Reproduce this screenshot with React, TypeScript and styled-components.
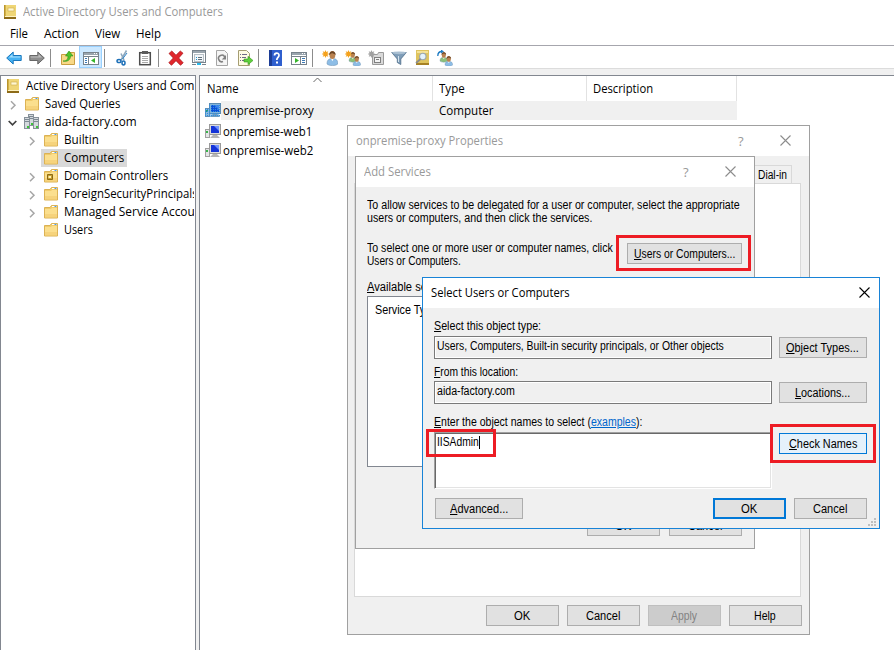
import React, { useLayoutEffect, useRef, useState } from "react";
import styled, { createGlobalStyle, css } from "styled-components";

const Global = createGlobalStyle`
  * { box-sizing: border-box; }
  html, body { margin: 0; padding: 0; background: #fff; overflow: hidden; }
  svg { display: block; flex: none; }
`;

const shell = '"Open Sans", "Noto Sans", sans-serif';
const classic = '"Liberation Sans", Arial, sans-serif';

/* ---------- text condensed to a given run length ---------- */
const Run = styled.span<{ $w: number }>`
  display: inline-block;
  flex: none;
  width: ${(p) => p.$w}px;
  white-space: nowrap;
  vertical-align: top;
`;
const Glyphs = styled.span`
  display: inline-block;
  white-space: nowrap;
  transform-origin: 0 50%;
  u {
    text-decoration-thickness: 1px;
    text-underline-offset: 1px;
    text-decoration-skip-ink: none;
  }
`;
function Text({ w, children }: { w: number; children: React.ReactNode }) {
  const ref = useRef<HTMLSpanElement>(null);
  const [scale, setScale] = useState(1);
  useLayoutEffect(() => {
    if (ref.current) setScale(w / ref.current.offsetWidth);
  }, [w]);
  return (
    <Run $w={w}>
      <Glyphs ref={ref} style={{ transform: `scaleX(${scale})` }}>
        {children}
      </Glyphs>
    </Run>
  );
}

/* ---------- main window ---------- */
const Desktop = styled.div`
  position: relative;
  width: 894px;
  height: 650px;
  overflow: hidden;
  display: flex;
  flex-direction: column;
  background: #fff;
  color: #000;
  font: 12px/18px ${shell};
`;
const TitleBar = styled.div`
  height: 24px;
  display: flex;
  align-items: center;
  gap: 6px;
  padding-left: 3px;
  color: #999;
`;
const MenuBar = styled.div`
  height: 21px;
  display: flex;
  gap: 16px;
  padding: 1px 0 0 10px;
`;
const Toolbar = styled.div`
  height: 24px;
  display: flex;
  border-top: 1px solid #a6a6ad;
  border-bottom: 1px solid #dcdcdc;
  padding-left: 2px;
  background: #fff;
`;
const Tool = styled.div<{ $on?: boolean }>`
  width: 23px;
  height: 22px;
  padding-top: 2px;
  display: flex;
  align-items: center;
  justify-content: center;
  ${(p) => p.$on && css`background: #cce8ff; border: 1px solid #99d1ff;`}
`;
const Divider = styled.div`
  width: 8px;
  padding: 3px 0 2px 2px;
  &::before { content: ""; display: block; width: 1px; height: 18px; background: #8c8c8c; }
`;
const Panes = styled.div`
  flex: 1;
  display: flex;
  gap: 3px;
  padding-top: 6px;
  background: #f0f0f0;
`;
const Tree = styled.div`
  width: 196px;
  padding-top: 1px;
  background: #fff;
  border: 1px solid #828790;
  border-bottom: 0;
  overflow: hidden;
`;
const TreeClip = styled.div`
  width: 193px;
  overflow: hidden;
`;
const Node = styled.div<{ $depth: number }>`
  height: 18px;
  display: flex;
  align-items: center;
  padding-left: ${(p) => [4, 3, 22][p.$depth]}px;
`;
const Twisty = styled.span`
  width: 18px;
  height: 16px;
  flex: none;
  padding: 1px 0 0 4px;
  display: flex;
  align-items: center;
`;
const NodeBody = styled.span<{ $selected?: boolean }>`
  flex: none;
  display: flex;
  align-items: center;
  height: 18px;
  gap: 6px;
  padding: 0 3px 0 1px;
  background: ${(p) => (p.$selected ? "#d9d9d9" : "transparent")};
`;
const List = styled.div`
  flex: 1;
  background: #fff;
  border: 1px solid #828790;
  border-right: 0;
  border-bottom: 0;
`;
const Header = styled.div`
  position: relative;
  height: 25px;
  display: grid;
  grid-template-columns: 233px 154px 150px;
`;
const HeadCell = styled.div<{ $pad: number }>`
  padding: 4px 0 0 ${(p) => p.$pad}px;
  border-right: 1px solid #e2e2e2;
`;
const SortMark = styled.svg`
  position: absolute;
  left: 113px;
  top: 1px;
`;
const ListRow = styled.div<{ $selected?: boolean }>`
  height: ${(p) => (p.$selected ? 21 : 19)}px;
  width: 537px;
  display: grid;
  grid-template-columns: 23px 216px 1fr;
  align-items: start;
  padding-top: 1px;
  background: ${(p) =>
    p.$selected ? "linear-gradient(#f0f0f0, #f0f0f0) 21px 0 / 516px 19px no-repeat" : "none"};
`;
const RowIcon = styled.span`
  padding: 1px 0 0 5px;
`;

/* ---------- dialogs ---------- */
const Dialog = styled.section<{ $x: number; $y: number; $w: number; $h: number; $active?: boolean }>`
  position: absolute;
  left: ${(p) => p.$x}px;
  top: ${(p) => p.$y}px;
  width: ${(p) => p.$w}px;
  height: ${(p) => p.$h}px;
  display: flex;
  flex-direction: column;
  background: #f0f0f0;
  border: 1px solid ${(p) => (p.$active ? "#1883d7" : "#a0a0a0")};
  font: 12px/13px ${classic};
`;
const Caption = styled.header<{ $active?: boolean }>`
  height: 30px;
  flex: none;
  display: flex;
  align-items: center;
  padding: 0 ${(p) => (p.$active ? 9 : 18)}px 0 8px;
  background: #fff;
  color: ${(p) => (p.$active ? "#000" : "#999")};
  font: 12px/18px ${shell};
`;
const CaptionButtons = styled.span`
  margin-left: auto;
  display: flex;
  align-items: center;
  gap: 36px;
  padding-bottom: 1px;
  font-size: 13px;
`;
const PushButton = styled.button<{ $w?: number; $kind?: "default" | "hot" | "disabled" }>`
  width: ${(p) => p.$w ?? 73}px;
  height: 21px;
  flex: none;
  padding: 1px 1px 0 0;
  text-align: center;
  border: 1px solid #adadad;
  border-radius: 0;
  background: #e1e1e1;
  color: #000;
  font: 12px/13px ${classic};
  ${(p) => p.$kind === "default" && css`border: 2px solid #0078d7;`}
  ${(p) => p.$kind === "hot" && css`border-color: #0078d7; background: #e5f1fb;`}
  ${(p) => p.$kind === "disabled" && css`border-color: #bfbfbf; background: #ccc; color: #838383;`}
`;
const Buttons = styled.div<{ $top: number; $right: number; $gap: number }>`
  display: flex;
  justify-content: flex-end;
  gap: ${(p) => p.$gap}px;
  padding: ${(p) => p.$top}px ${(p) => p.$right}px 0 0;
`;
const TabStrip = styled.div`
  height: 27px;
  padding: 9px 17px 0 0;
  display: flex;
  justify-content: flex-end;
`;
const Tab = styled.div`
  width: 40px;
  height: 18px;
  padding: 3px 0 0 5px;
  border: 1px solid #d9d9d9;
  border-bottom: 0;
`;
const TabPage = styled.div`
  width: 447px;
  height: 414px;
  margin-left: 6px;
  background: #fff;
  border: 1px solid #d9d9d9;
`;
const AddBody = styled.div`
  padding: 12px 0 0 11px;
  display: flex;
  flex-direction: column;
`;
const Para = styled.p`
  margin: 0;
  height: 26px;
  display: flex;
  flex-direction: column;
`;
const PickRow = styled.div`
  display: flex;
  align-items: flex-start;
  gap: 14px;
  padding-top: 17px;
`;
const PickButton = styled.div`
  height: 22px;
  padding-top: 1px;
`;
const ListLabel = styled.div`
  padding-top: 13px;
`;
const ServiceList = styled.div`
  width: 375px;
  height: 171px;
  margin-top: 2px;
  padding: 7px;
  background: #fff;
  border: 1px solid #828790;
`;
const Form = styled.div`
  display: grid;
  grid-template-columns: 338px 88px;
  column-gap: 7px;
  padding: 12px 0 0 11px;
`;
const FieldLabel = styled.label<{ $h: number; $top?: number }>`
  grid-column: 1 / -1;
  height: ${(p) => p.$h}px;
  padding-top: ${(p) => p.$top ?? 0}px;
  a { color: #0066cc; text-decoration: underline; text-underline-offset: 1px; }
`;
const Field = styled.div`
  height: 23px;
  padding: 3px 0 0 2px;
  border: 1px solid #7a7a7a;
  box-shadow: inset -1px -1px #fff, inset 1px 1px #fff;
`;
const NamesBox = styled.div`
  height: 57px;
  padding: 3px 0 0 2px;
  display: flex;
  align-items: flex-start;
  background: #fff;
  border: 1px solid;
  border-color: #a0a0a0 #fff #fff #a0a0a0;
  box-shadow: inset 1px 1px #696969, inset -1px -1px #e3e3e3;
`;
const Caret = styled.span`
  width: 1px;
  height: 13px;
  background: #000;
`;
const ButtonSlot = styled.div`
  padding-top: 1px;
`;
const FormFooter = styled.div`
  display: flex;
  padding: 9px 12px 0 12px;
  gap: 8px;
`;
const Spacer = styled.span`
  flex: 1;
`;
const Grip = styled.svg`
  position: absolute;
  right: 3px;
  bottom: 2px;
`;
const Callout = styled.div<{ $x: number; $y: number; $w: number; $h: number }>`
  position: absolute;
  left: ${(p) => p.$x}px;
  top: ${(p) => p.$y}px;
  width: ${(p) => p.$w}px;
  height: ${(p) => p.$h}px;
  border: 3px solid #ed1c24;
`;

/* ---------- icons ---------- */
const Svg = ({ children, w = 16, h = 16 }: { children: React.ReactNode; w?: number; h?: number }) => (
  <svg width={w} height={h} viewBox={`0 0 ${w} ${h}`}>{children}</svg>
);
const Book = () => (
  <Svg w={14}>
    <rect x="1" y="1" width="12" height="14" fill="#b9952d" />
    <rect x="2" y="1" width="11" height="11" fill="#efd676" />
    <rect x="2" y="1" width="1" height="12" fill="#d2b14a" />
    <rect x="5" y="4" width="6" height="3" fill="#fff7d0" stroke="#c9aa4a" strokeWidth=".6" />
    <rect x="2" y="12" width="11" height="1" fill="#fff3c2" />
    <rect x="1" y="13" width="12" height="2" fill="#8d6b18" />
  </Svg>
);
const Folder = ({ ou }: { ou?: boolean }) => (
  <Svg w={16}>
    <path d="M2.500 3.500h5.500l1.500-2h6v12.500h-13z" fill="#f0cb6a" stroke="#dcb254" />
    <path d="M10 2.500h5" stroke="#fff" />
    <path d="M12.500 2.500h2" stroke="#4c9be8" />
    <path d="M3 5h6l1-1h5v9H3z" fill="#fbdf8e" />
    <path d="M3 10h12v3.500H3z" fill="#f6d37c" />
    {ou && <path d="M5.500 6.500h5v5h-5z" fill="#c9a02c" stroke="#8b6a15" />}
    {ou && <path d="M6.500 8h2.500v2h-2.500z" fill="#fff2b8" />}
  </Svg>
);
const Domain = () => (
  <Svg>
    {[[5, 0], [1, 3], [10, 3]].map(([x, y]) => (
      <g key={x}>
        <rect x={x + 0.5} y={y + 0.5} width="5" height="11" fill="#d5dade" stroke="#87919a" />
        <path d={`M${x + 1} ${y + 2}.500h4M${x + 1} ${y + 4}.500h4`} stroke="#7d8993" />
        <rect x={x + 3} y={y + 9} width="2" height="2" fill="#3fc43a" />
      </g>
    ))}
  </Svg>
);
const ChevronRight = () => (
  <Svg w={9} h={12}><path d="M3 2.200l4 4-4 4" fill="none" stroke="#a6a6a6" strokeWidth="1.500" /></Svg>
);
const ChevronDown = () => (
  <Svg w={9} h={10}><path d="M.7 3l3.800 3.800L8.300 3" fill="none" stroke="#404040" strokeWidth="1.700" /></Svg>
);
const Computer = ({ selected }: { selected?: boolean }) => (
  <Svg w={17}>
    <rect x="0.500" y="5.500" width="4" height="8" fill="#e4e5e7" stroke="#a0a0a0" />
    <rect x="1" y="7" width="2" height="2" fill="#39b54a" />
    <rect x="4.500" y=".5" width="11" height="10" fill="#dcdcdc" stroke="#9a9a9a" />
    <rect x="6" y="2" width="8" height="7" fill="#1534d8" />
    <path d="M9 2h5v5z" fill="#6f92ff" />
    <path d="M8 11h4l3 3H5z" fill="#b5b5b5" />
    {selected && <path d="M0 5h4V0h12v11h-2l1 3H0z" fill="#0078d7" fillOpacity=".4" />}
    {selected && (
      <path d="M0 6.500h16M4 2.500h12M4 4.500h12M0 8.500h16M0 10.500h16M0 12.500h15" stroke="#2f8fe0" strokeDasharray="1 1" />
    )}
  </Svg>
);
const Close = ({ dark }: { dark?: boolean }) => (
  <Svg w={11} h={11}><path d="M.5.500l10 10M10.500.500l-10 10" stroke={dark ? "#000" : "#8c8c8c"} strokeWidth="1.100" /></Svg>
);
const BackArrow = () => (
  <Svg><path d="M.7 8l6.500-6v3.500h8v5h-8V14z" fill="#46b2f2" stroke="#1876bd" /><path d="M3 7.500L6.500 4v2.500h8v1z" fill="#a5defb" /></Svg>
);
const ForwardArrow = () => (
  <Svg><path d="M15.300 8l-6.500-6v3.500h-8v5h8V14z" fill="#8e8e8e" stroke="#666" /><path d="M13 7.500L9.500 4v2.500h-8v1z" fill="#bdbdbd" /></Svg>
);
const FolderUp = () => (
  <Svg>
    <path d="M1.500 4.500h6l1-2h6v12h-13z" fill="#f8d886" stroke="#c99f43" />
    <path d="M3 11c4 0 5-2 5-5H5.500L9 1l4 5h-2.500c0 4-3 6-7.500 5z" fill="#4fc52c" stroke="#2b9118" strokeWidth=".6" />
  </Svg>
);
const Console = ({ play }: { play?: boolean }) => (
  <Svg>
    <rect x=".5" y="2.500" width="15" height="12" fill="#fff" stroke="#78838c" />
    <rect x="1" y="3" width="14" height="2" fill="#9aa5ae" />
    <path d="M11 3.500h1M13 3.500h1" stroke="#fff" />
    <path d="M0 6.500h16" stroke="#78838c" />
    {play ? (
      <g><path d="M9.500 7v7" stroke="#78838c" /><path d="M4 8l4 2.500L4 13z" fill="#35b52b" /><path d="M11 8.500h3M11 10.500h3M11 12.500h3" stroke="#3c78b4" /></g>
    ) : (
      <g><path d="M5.500 7v7" stroke="#78838c" /><path d="M12 8l-4 2.500 4 2.500z" fill="#35b52b" /><path d="M2 8.500h2M2 10.500h2M2 12.500h2" stroke="#3c78b4" /></g>
    )}
  </Svg>
);
const Scissors = () => (
  <Svg>
    <path d="M12.500.500L7 10M7 3.500L10 10" stroke="#8fa9be" strokeWidth="1.600" />
    <ellipse cx="5" cy="11" rx="2" ry="1.600" fill="none" stroke="#1d70b8" strokeWidth="1.500" />
    <ellipse cx="9.500" cy="13" rx="1.500" ry="1.900" fill="none" stroke="#1d70b8" strokeWidth="1.500" />
    <path d="M13 3L8.500 9" stroke="#2d83c9" />
  </Svg>
);
const Clipboard = () => (
  <Svg>
    <rect x="2.700" y="2.700" width="10.600" height="12" fill="#fff" stroke="#4d4d4d" strokeWidth="1.500" />
    <path d="M5 1h6v3H5z" fill="#5b5b5b" />
    <path d="M5 6.500h6M5 8.500h6M5 10.500h6M5 12.500h6" stroke="#aaa" />
  </Svg>
);
const Delete = () => (
  <Svg><path d="M1 3.500L3.800 1 8 5.200 12.300 1 15 3.200 10.700 8l4.500 4.800-2.700 2.500L8 10.700l-4.500 4.600L.8 12.700 5.300 8z" fill="#e0262c" stroke="#a81116" strokeWidth=".7" /></Svg>
);
const Properties = () => (
  <Svg>
    <rect x="1.500" y=".5" width="13" height="12" fill="#fff" stroke="#78838c" />
    <path d="M2 2h12" stroke="#9aa5ae" strokeWidth="2" />
    <rect x="3.500" y="4.500" width="9" height="7" fill="#f3f7fa" stroke="#b7c0c7" />
    <path d="M5 7.500h1M5 9.500h1" stroke="#2294d0" /><path d="M7 7.500h4M7 9.500h4" stroke="#62717c" />
    <rect x="6" y="13" width="4" height="2" fill="#29b8ea" /><path d="M1 14.500h4M11 14.500h4" stroke="#78838c" />
  </Svg>
);
const Refresh = () => (
  <Svg>
    <path d="M2.500.500h8l3 3v12h-11z" fill="#f5f5f5" stroke="#a5a5a5" />
    <path d="M10.800 7A3.300 3.300 0 1 0 9 11.500" fill="none" stroke="#808080" strokeWidth="1.600" />
    <path d="M12 5v4.500H7.800z" fill="#808080" />
  </Svg>
);
const Export = () => (
  <Svg>
    <path d="M1.500.500h8l3 3v12h-11z" fill="#fffbe3" stroke="#a59d72" />
    <path d="M3 4.500h1M3 7.500h1M3 10.500h1M5 4.500h5M5 7.500h4M5 10.500h3" stroke="#6f6a86" />
    <path d="M7 9h4V6.300l5 4.200-5 4.200V12H7z" fill="#5fcf3d" stroke="#35991d" strokeWidth=".6" />
  </Svg>
);
const HelpBook = () => (
  <Svg>
    <rect x="1" y="0" width="13" height="16" fill="#2f5fce" /><rect x="1" y="0" width="3" height="16" fill="#1c3d96" />
    <path d="M6.500 5.500c0-3 4.500-3 4.500-.3C11 7.500 8.800 7.300 8.800 10" fill="none" stroke="#fff" strokeWidth="1.700" />
    <rect x="8" y="11.500" width="2" height="2" fill="#fff" />
  </Svg>
);
const star = "M3.500 0l.8 2 2-.8-.9 2 2 .8-2 .8.9 2-2-.8-.8 2-.8-2-2 .8.9-2-2-.8 2-.8-.9-2 2 .8z";
const Person = ({ x, y, s, c }: { x: number; y: number; s: number; c: string }) => (
  <g transform={`translate(${x} ${y}) scale(${s})`}>
    <path d="M0 12c0-4 2-5 5-5s5 1 5 5c-2 2-8 2-10 0z" fill={c} stroke="#6c92b3" strokeWidth=".5" />
    <path d="M3.500 6.500h3L5 9.500z" fill="#fff" />
    <ellipse cx="5" cy="3.800" rx="2.700" ry="3.700" fill="#b98250" />
    <path d="M2 4C1.600-1 8.400-1 8 4 7.400 2 5 2.500 4 2z" fill="#6b4526" />
  </g>
);
const NewUser = () => (<Svg><Person x={5} y={1} s={1.080} c="#8dbde6" /><path d={star} fill="#f4a21d" /></Svg>);
const NewGroup = () => (<Svg><Person x={4} y={2} s={0.760} c="#8bc07a" /><Person x={8} y={6} s={0.760} c="#8dbde6" /><path d={star} fill="#f4a21d" /></Svg>);
const NewOU = () => (
  <Svg>
    <path d="M4.500 4.500h5l1-2h5v12h-11z" fill="#d9d9d9" stroke="#9a9a9a" />
    <rect x="6.500" y="7.500" width="6" height="5" fill="#f3f3f3" stroke="#808080" /><path d="M8 9.500h3" stroke="#808080" />
    <path d={star} fill="#a0a0a0" />
  </Svg>
);
const Filter = () => (
  <Svg><path d="M.7 2.500h14.600L9.800 9v5.500l-3.500-2V9z" fill="#7f9db8" stroke="#4b6b88" strokeWidth=".8" /><ellipse cx="8" cy="2.800" rx="7" ry="1.400" fill="#a9bfd2" /><path d="M7.500 6v6" stroke="#d6e4ee" /></Svg>
);
const Find = () => (
  <Svg>
    <rect x="2" y="0" width="13" height="15" fill="#dfc45e" /><rect x="2" y="13" width="13" height="2" fill="#a68124" />
    <rect x="3" y="1" width="11" height="2" fill="#f5e397" />
    <circle cx="8.800" cy="6.500" r="3.200" fill="#e4f3fb" stroke="#9aa7b0" strokeWidth="1.100" /><path d="M6.500 9L2 13" stroke="#8a8c8e" strokeWidth="1.700" />
  </Svg>
);
const AddToGroup = () => (
  <Svg><Person x={3} y={2} s={0.760} c="#8bc07a" /><Person x={8} y={6} s={0.760} c="#8dbde6" /><path d="M.8 6C.8 2.500 2 1.500 5 1.500" fill="none" stroke="#1e7cc4" strokeWidth="1.300" /><path d="M4-.5l3 2-3 2z" fill="#1e7cc4" /></Svg>
);
const ShowActions = () => <Console play />;

const toolGroups = [
  [BackArrow, ForwardArrow],
  [FolderUp, Console],
  [Scissors, Clipboard],
  [Delete, Properties, Refresh, Export],
  [HelpBook, ShowActions],
  [NewUser, NewGroup, NewOU, Filter, Find, AddToGroup],
];

type TreeItem = { label: string; w: number; depth: number; arrow?: "right" | "down"; icon?: "domain" | "ou"; selected?: boolean };
const treeItems: TreeItem[] = [
  { label: "Saved Queries", w: 75, depth: 1, arrow: "right" },
  { label: "aida-factory.com", w: 92, depth: 1, arrow: "down", icon: "domain" },
  { label: "Builtin", w: 35, depth: 2, arrow: "right" },
  { label: "Computers", w: 60, depth: 2, selected: true },
  { label: "Domain Controllers", w: 104, depth: 2, arrow: "right", icon: "ou" },
  { label: "ForeignSecurityPrincipals", w: 134, depth: 2, arrow: "right" },
  { label: "Managed Service Accounts", w: 148, depth: 2, arrow: "right" },
  { label: "Users", w: 29, depth: 2 },
];
const computers = [
  { name: "onpremise-proxy", w: 91, type: "Computer" },
  { name: "onpremise-web1", w: 89 },
  { name: "onpremise-web2", w: 90 },
];

export default function App() {
  return (
    <Desktop>
      <Global />
      <TitleBar><Book /><Text w={200}>Active Directory Users and Computers</Text></TitleBar>
      <MenuBar>
        <Text w={18}>File</Text><Text w={35}>Action</Text><Text w={25}>View</Text><Text w={25}>Help</Text>
      </MenuBar>
      <Toolbar>
        {toolGroups.map((group, g) => (
          <React.Fragment key={g}>
            {g > 0 && <Divider />}
            {group.map((Icon, i) => <Tool key={i} $on={g === 1 && i === 1}><Icon /></Tool>)}
          </React.Fragment>
        ))}
      </Toolbar>
      <Panes>
        <Tree>
          <TreeClip>
            <Node $depth={0}><NodeBody><Book /><Text w={168}>Active Directory Users and Com</Text></NodeBody></Node>
            {treeItems.map((t) => (
              <Node key={t.label} $depth={t.depth}>
                <Twisty>{t.arrow === "right" && <ChevronRight />}{t.arrow === "down" && <ChevronDown />}</Twisty>
                <NodeBody $selected={t.selected}>
                  {t.icon === "domain" ? <Domain /> : <Folder ou={t.icon === "ou"} />}
                  <Text w={t.w}>{t.label}</Text>
                </NodeBody>
              </Node>
            ))}
          </TreeClip>
        </Tree>
        <List>
          <Header>
            <SortMark width="9" height="6" viewBox="0 0 9 6"><path d="M.5 5l4-4 4 4" fill="none" stroke="#666" /></SortMark>
            <HeadCell $pad={7}><Text w={32}>Name</Text></HeadCell>
            <HeadCell $pad={6}><Text w={26}>Type</Text></HeadCell>
            <HeadCell $pad={6}><Text w={60}>Description</Text></HeadCell>
          </Header>
          {computers.map((c, i) => (
            <ListRow key={c.name} $selected={i === 0}>
              <RowIcon><Computer selected={i === 0} /></RowIcon>
              <Text w={c.w}>{c.name}</Text>
              {c.type && <Text w={55}>{c.type}</Text>}
            </ListRow>
          ))}
        </List>
      </Panes>

      <Dialog $x={347} $y={125} $w={463} $h={510}>
        <Caption>
          <Text w={147}>onpremise-proxy Properties</Text>
          <CaptionButtons><Text w={6}>?</Text><Close /></CaptionButtons>
        </Caption>
        <TabStrip><Tab><Text w={29}>Dial-in</Text></Tab></TabStrip>
        <TabPage />
        <Buttons $top={8} $right={7} $gap={8}>
          <PushButton><Text w={16}>OK</Text></PushButton>
          <PushButton><Text w={34}>Cancel</Text></PushButton>
          <PushButton $kind="disabled"><Text w={26}>Apply</Text></PushButton>
          <PushButton><Text w={22}>Help</Text></PushButton>
        </Buttons>
      </Dialog>

      <Dialog $x={355} $y={156} $w={400} $h={393}>
        <Caption>
          <Text w={67}>Add Services</Text>
          <CaptionButtons><Text w={6}>?</Text><Close /></CaptionButtons>
        </Caption>
        <AddBody>
          <Para>
            <Text w={373}>To allow services to be delegated for a user or computer, select the appropriate</Text>
            <Text w={225}>users or computers, and then click the services.</Text>
          </Para>
          <PickRow>
            <Para>
              <Text w={246}>To select one or more user or computer names, click</Text>
              <Text w={94}>Users or Computers.</Text>
            </Para>
            <PickButton><PushButton $w={115}><Text w={101}><u>U</u>sers or Computers...</Text></PushButton></PickButton>
          </PickRow>
          <ListLabel><Text w={92}><u>A</u>vailable services:</Text></ListLabel>
          <ServiceList><Text w={62}>Service Type</Text></ServiceList>
        </AddBody>
        <Buttons $top={48} $right={12} $gap={9}>
          <PushButton><Text w={16}>OK</Text></PushButton>
          <PushButton><Text w={34}>Cancel</Text></PushButton>
        </Buttons>
      </Dialog>
      <Callout $x={616} $y={235} $w={135} $h={36} />

      <Dialog $active $x={422} $y={277} $w={458} $h={252}>
        <Caption $active>
          <Text w={139}>Select Users or Computers</Text>
          <CaptionButtons><Close dark /></CaptionButtons>
        </Caption>
        <Form>
          <FieldLabel $h={16}><Text w={107}><u>S</u>elect this object type:</Text></FieldLabel>
          <Field><Text w={287}>Users, Computers, Built-in security principals, or Other objects</Text></Field>
          <ButtonSlot><PushButton $w={88}><Text w={73}><u>O</u>bject Types...</Text></PushButton></ButtonSlot>
          <FieldLabel $h={22} $top={7}><Text w={84}><u>F</u>rom this location:</Text></FieldLabel>
          <Field><Text w={78}>aida-factory.com</Text></Field>
          <ButtonSlot><PushButton $w={88}><Text w={55}><u>L</u>ocations...</Text></PushButton></ButtonSlot>
          <FieldLabel $h={28} $top={12}><Text w={208}><u>E</u>nter the object names to select (<a>examples</a>):</Text></FieldLabel>
          <NamesBox><Text w={42}>IISAdmin</Text><Caret /></NamesBox>
          <ButtonSlot><PushButton $w={88} $kind="hot"><Text w={68}><u>C</u>heck Names</Text></PushButton></ButtonSlot>
        </Form>
        <FormFooter>
          <PushButton $w={88}><Text w={58}><u>A</u>dvanced...</Text></PushButton>
          <Spacer />
          <PushButton $kind="default"><Text w={16}>OK</Text></PushButton>
          <PushButton><Text w={34}>Cancel</Text></PushButton>
        </FormFooter>
        <Grip width="8" height="8" viewBox="0 0 8 8">
          <path d="M6 0h2v2H6zM3 3h2v2H3zM6 3h2v2H6zM0 6h2v2H0zM3 6h2v2H3zM6 6h2v2H6z" fill="#bfbfbf" />
        </Grip>
      </Dialog>
      <Callout $x={426} $y={429} $w={70} $h={28} />
      <Callout $x={770} $y={424} $w={106} $h={39} />
    </Desktop>
  );
}
